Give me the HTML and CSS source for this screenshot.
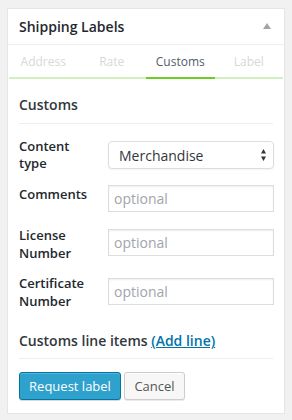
FILE: index.html
```html
<!DOCTYPE html>
<html>
<head>
<meta charset="utf-8">
<link rel="stylesheet" href="styles.css">
</head>
<body>
<div class="card">
  <div class="card-header">
    <h2 class="card-title">Shipping Labels</h2>
    <svg class="toggle" width="8" height="6" viewBox="0 0 8 6"><path d="M4 0 L8 6 L0 6 Z" fill="#a0a5aa"/></svg>
  </div>
  <div class="tabs">
    <div class="tab">Address</div>
    <div class="tab">Rate</div>
    <div class="tab active">Customs</div>
    <div class="tab">Label</div>
  </div>
  <div class="content">
    <h3 class="section-title">Customs</h3>
    <div class="row row-1">
      <label class="lbl">Content<br>type</label>
      <div class="select-wrap">
        <select class="select"><option>Merchandise</option></select>
        <svg class="arrows" width="5" height="12" viewBox="0 0 5 12"><path d="M2.5 0 L5 4.5 L0 4.5 Z M0 7.5 L5 7.5 L2.5 12 Z" fill="#32373c"/></svg>
      </div>
    </div>
    <div class="row row-2">
      <label class="lbl">Comments</label>
      <input class="input" type="text" placeholder="optional">
    </div>
    <div class="row row-3">
      <label class="lbl">License<br>Number</label>
      <input class="input" type="text" placeholder="optional">
    </div>
    <div class="row row-4">
      <label class="lbl">Certificate<br>Number</label>
      <input class="input" type="text" placeholder="optional">
    </div>
    <div class="line-items">Customs line items <a class="add-line" href="#">(Add line)</a></div>
    <div class="actions">
      <button class="btn btn-primary">Request label</button>
      <button class="btn btn-secondary">Cancel</button>
    </div>
  </div>
</div>
</body>
</html>
```
FILE: styles.css
```css
html, body {
  background: #f1f1f1;
}
body {
  margin: 8px 7px 0;
  font-family: "Open Sans", "Liberation Sans", sans-serif;
  color: #23282d;
}
.card {
  background: #fff;
  border: 1px solid #e5e5e5;
  box-shadow: 0 1px 1px rgba(0,0,0,0.04);
  padding-bottom: 13px;
}
.card-header {
  height: 35px;
  border-bottom: 1px solid #eee;
  display: flex;
  align-items: center;
  justify-content: space-between;
  padding: 0 13px 0 11px;
}
.card-title {
  margin: 0;
  font-size: 14px;
  font-weight: 600;
  line-height: 20px;
  color: #23282d;
}
.toggle {
  display: block;
  margin-top: -1px;
}
.tabs {
  display: flex;
  margin: 0 1px;
}
.tab {
  flex: 1;
  text-align: center;
  font-size: 12px;
  line-height: 18px;
  padding: 8px 0 6px;
  color: #d8d8d8;
  border-bottom: 2px solid #d0f0bf;
}
.tab.active {
  color: #555d66;
  border-bottom-color: #6bcd25;
}
.content {
  padding: 0 11px;
}
.section-title {
  margin: 16px 0 0;
  font-size: 14px;
  font-weight: 600;
  line-height: 20px;
  padding-bottom: 8px;
  border-bottom: 1px solid #eee;
  color: #32373c;
}
.row {
  display: flex;
  align-items: flex-start;
}
.lbl {
  width: 89px;
  flex: none;
  font-size: 13px;
  font-weight: 600;
  line-height: 18px;
  color: #23282d;
}
.row-1 { margin-top: 14px; }
.row-1 .lbl { line-height: 17px; }
.row-1 .select-wrap { margin-top: 3px; }
.row-2 { margin-top: 13px; }
.row-3 { margin-top: 14px; }
.row-3 .input { margin-top: 3px; }
.row-4 { margin-top: 12px; }
.row-4 .input { margin-top: 4px; }
.select-wrap {
  position: relative;
  width: 166px;
}
.select {
  display: block;
  width: 166px;
  height: 28px;
  margin: 0;
  padding: 0 20px 0 10px;
  box-sizing: border-box;
  border: 1px solid #ddd;
  border-radius: 4px;
  background: #fff;
  font-family: "Open Sans", "Liberation Sans", sans-serif;
  font-size: 14px;
  color: #32373c;
  -webkit-appearance: none;
  appearance: none;
  box-shadow: 0 1px 2px rgba(0,0,0,0.05);
}
.arrows {
  position: absolute;
  right: 8px;
  top: 8px;
}
.input {
  display: block;
  width: 166px;
  height: 27px;
  margin: 0;
  padding: 0 5px;
  box-sizing: border-box;
  border: 1px solid #ddd;
  border-radius: 0;
  background: #fff;
  box-shadow: inset 0 1px 2px rgba(0,0,0,0.07);
  font-family: "Open Sans", "Liberation Sans", sans-serif;
  font-size: 14px;
  color: #32373c;
}
.input::placeholder {
  color: #a0a5aa;
  opacity: 1;
}
.line-items {
  margin-top: 21px;
  font-size: 14px;
  font-weight: 600;
  line-height: 20px;
  color: #32373c;
  padding-bottom: 7px;
  border-bottom: 1px solid #eee;
}
.add-line {
  color: #0073aa;
  text-decoration: underline;
}
.actions {
  display: flex;
  gap: 3px;
  margin-top: 13px;
}
.btn {
  height: 28px;
  box-sizing: border-box;
  padding: 0;
  white-space: nowrap;
  text-align: center;
  font-family: "Open Sans", "Liberation Sans", sans-serif;
  font-size: 13px;
  line-height: 26px;
  border-radius: 3px;
  margin: 0;
}
.btn-primary {
  background: #2ea2cc;
  border: 1px solid #0074a2;
  color: #fff;
  box-shadow: inset 0 1px 0 rgba(120,200,230,0.5), 0 1px 0 rgba(0,0,0,0.15);
  width: 102px;
}
.btn-secondary {
  background: #f7f7f7;
  border: 1px solid #ccc;
  color: #555;
  box-shadow: inset 0 1px 0 #fff, 0 1px 0 rgba(0,0,0,0.08);
  width: 61px;
}
```
